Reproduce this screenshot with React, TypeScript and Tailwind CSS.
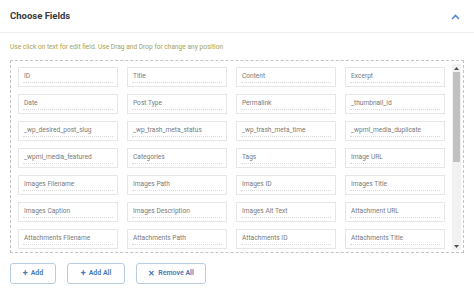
import React from "react";

const fields = [
  "ID", "Title", "Content", "Excerpt",
  "Date", "Post Type", "Permalink", "_thumbnail_id",
  "_wp_desired_post_slug", "_wp_trash_meta_status", "_wp_trash_meta_time", "_wpml_media_duplicate",
  "_wpml_media_featured", "Categories", "Tags", "Image URL",
  "Images Filename", "Images Path", "Images ID", "Images Title",
  "Images Caption", "Images Description", "Images Alt Text", "Attachment URL",
  "Attachments Filename", "Attachments Path", "Attachments ID", "Attachments Title",
];

function FieldBox({ label }: { label: string }) {
  return (
    <div className="h-[20px] border border-[#e6e6e6] bg-white px-[4px] pt-[3px]">
      <div className="h-[12px] border-b border-dotted border-[#d9d9d9] pl-[1px] text-[6.6px] leading-[11px] text-[#7a7a7a] whitespace-nowrap overflow-hidden">
        {label}
      </div>
    </div>
  );
}

export default function App() {
  return (
    <div className="w-[474px] h-[296px] overflow-hidden bg-white font-['Roboto',sans-serif]">
      {/* Header */}
      <div className="flex h-[33px] items-center justify-between border-b border-[#ededed] pl-[10px] pr-[14px]">
        <span className="text-[9.5px] font-bold text-[#3a3a3a]">Choose Fields</span>
        <svg width="9" height="6" viewBox="0 0 9 6" className="mt-[1px]">
          <path d="M1 5 L4.5 1.5 L8 5" fill="none" stroke="#5b88c6" strokeWidth="1.6" />
        </svg>
      </div>

      {/* Hint */}
      <p className="px-[10px] pt-[10px] text-[6.6px] leading-[9px] text-[#a6a254]">
        Use click on text for edit field. Use Drag and Drop for change any position
      </p>

      {/* Fields box */}
      <div className="mx-[10px] mt-[8px] flex h-[193px] border border-dashed border-[#c4c4c4]">
        <div className="w-[434px] overflow-hidden pl-[7px] pt-[6px]">
          <div className="grid grid-cols-[repeat(4,100px)] auto-rows-[20px] gap-x-[9px] gap-y-[7px]">
            {fields.map((f) => (
              <FieldBox key={f} label={f} />
            ))}
          </div>
        </div>
        {/* Scrollbar */}
        <div className="ml-[7px] mt-[3px] mb-[2px] flex w-[9px] flex-col bg-[#f1f1f1]">
          <div className="flex h-[8px] items-center justify-center">
            <svg width="5" height="3" viewBox="0 0 5 3">
              <path d="M0 3 L2.5 0 L5 3 Z" fill="#505050" />
            </svg>
          </div>
          <div className="mx-[1px] h-[90px] bg-[#c1c1c1]" />
          <div className="flex-1" />
          <div className="flex h-[8px] items-center justify-center">
            <svg width="5" height="3" viewBox="0 0 5 3">
              <path d="M0 0 L2.5 3 L5 0 Z" fill="#505050" />
            </svg>
          </div>
        </div>
      </div>

      {/* Buttons */}
      <div className="flex gap-[11px] px-[10px] pt-[10px]">
        <button className="flex h-[21px] w-[46px] items-center justify-center gap-[3px] rounded-[3px] border border-[#b9cde0] text-[7px] font-semibold text-[#4a78b4]">
          <span className="text-[9px] font-bold leading-none">+</span> Add
        </button>
        <button className="flex h-[21px] w-[58px] items-center justify-center gap-[3px] rounded-[3px] border border-[#b9cde0] text-[7px] font-semibold text-[#4a78b4]">
          <span className="text-[9px] font-bold leading-none">+</span> Add All
        </button>
        <button className="flex h-[21px] w-[70px] items-center justify-center gap-[3px] rounded-[3px] border border-[#b9cde0] text-[7px] font-semibold text-[#4a78b4]">
          <span className="text-[8px] font-bold leading-none">✕</span> Remove All
        </button>
      </div>
    </div>
  );
}
